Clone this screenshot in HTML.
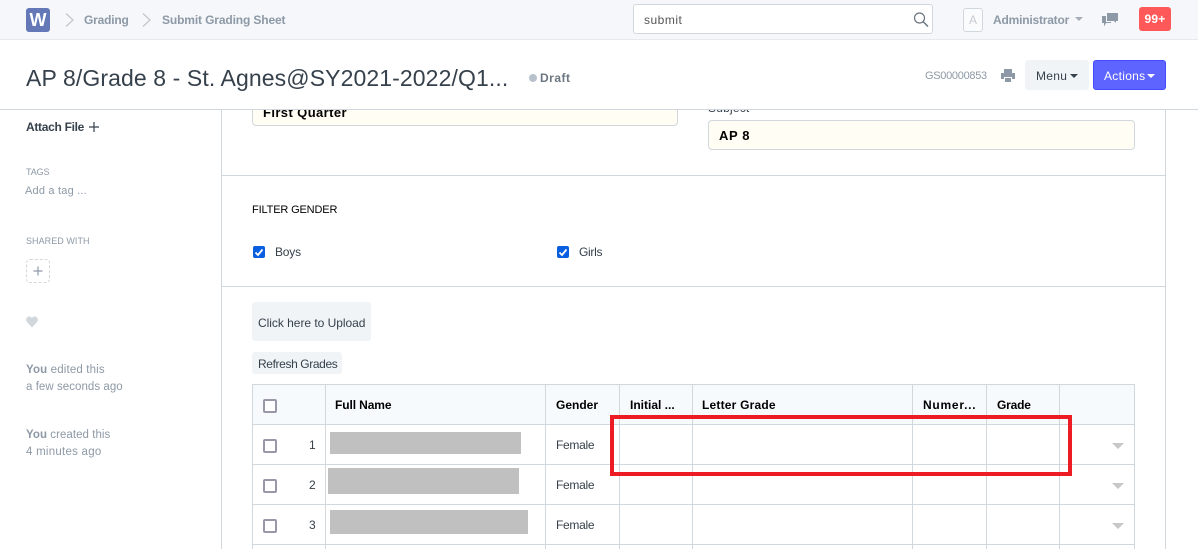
<!DOCTYPE html>
<html><head><meta charset="utf-8">
<style>
html,body{margin:0;padding:0;background:#fff}
#p{position:relative;width:1198px;height:549px;overflow:hidden;background:#fff;font-family:"Liberation Sans",sans-serif;font-size:12px;color:#36414c}
#p div,#p span.t{position:absolute;white-space:nowrap}
.t{line-height:16px;letter-spacing:.55px}
.b{font-weight:bold}
.g{color:#8d99a6}
.cb{width:10px;height:10px;border:2px solid #9a98a8;border-radius:2px;background:#fff}
.hl{background:#d1d8dd;height:1px}
.vl{background:#d1d8dd;width:1px}
.bar{background:#c0c0c0}
.car{width:0;height:0;border-left:6px solid transparent;border-right:6px solid transparent;border-top:6px solid #c8c8c8}
</style></head><body><div id="p">

<div style="left:252px;top:385px;width:883px;height:39px;background:#f7fafc"></div>
<div style="left:252px;top:108px;width:424px;height:17px;background:#fffdf4;border:1px solid #d1d8dd;border-top:0;border-radius:0 0 4px 4px"></div>
<div class="t b" style="left:263px;top:105px;font-size:13px;color:#000;letter-spacing:.4px">First Quarter</div>
<div class="t" style="left:708px;top:100px;color:#36414c;letter-spacing:.2px">Subject</div>
<div style="left:708px;top:120px;width:425px;height:28px;background:#fffdf4;border:1px solid #d1d8dd;border-radius:4px"></div>
<div class="t b" style="left:719px;top:128px;font-size:13px;color:#000;letter-spacing:.6px">AP 8</div>

<div style="left:0;top:40px;width:1198px;height:69px;background:#fff"></div>
<div class="hl" style="left:0;top:109px;width:1198px"></div>
<div style="left:0;top:0;width:1198px;height:39px;background:#f5f7fa"></div>
<div style="left:0;top:39px;width:1198px;height:1px;background:#e6e9ed"></div>

<div style="left:26px;top:8px;width:24px;height:24px;background:#6478b8;border-radius:3px"></div>
<div class="b" style="left:26px;top:8px;width:24px;text-align:center;line-height:24px;font-size:18px;color:#fff">W</div>
<svg style="position:absolute;left:64px;top:12px" width="12" height="16"><path d="M2 1.5 L9 8 L2 14.5" fill="none" stroke="#c0c6cc" stroke-width="1.2"/></svg>
<div class="t b g" style="left:84px;top:12px;letter-spacing:-.2px">Grading</div>
<svg style="position:absolute;left:141px;top:12px" width="12" height="16"><path d="M2 1.5 L9 8 L2 14.5" fill="none" stroke="#c0c6cc" stroke-width="1.2"/></svg>
<div class="t b g" style="left:162px;top:12px;letter-spacing:-.13px">Submit Grading Sheet</div>

<div style="left:633px;top:4px;width:298px;height:28px;background:#fff;border:1px solid #d1d8dd;border-radius:3px"></div>
<div class="t" style="left:644px;top:12px;color:#555;letter-spacing:.5px">submit</div>
<svg style="position:absolute;left:912px;top:11px" width="18" height="18"><circle cx="7.5" cy="7" r="5" fill="none" stroke="#6b7480" stroke-width="1.2"/><path d="M11 10.5 L16 15.5" stroke="#6b7480" stroke-width="1.5"/></svg>

<div style="left:963px;top:8px;width:18px;height:22px;background:#fafbfc;border:1px solid #d1d8dd;border-radius:3px"></div>
<div class="t" style="left:963px;top:12px;width:20px;text-align:center;color:#c5ccd3;letter-spacing:0">A</div>
<div class="t b g" style="left:993px;top:12px;letter-spacing:-.2px">Administrator</div>
<div style="left:1075px;top:17px;width:0;height:0;border-left:4px solid transparent;border-right:4px solid transparent;border-top:4px solid #a5aeb8"></div>
<svg style="position:absolute;left:1102px;top:13px" width="16" height="14"><path d="M5 0H16V8H14V10L12 8H5Z" fill="#8d99a6"/><path d="M0 3H4V9H9V10H4L2 13.5V10H0Z" fill="#8d99a6"/></svg>
<div style="left:1139px;top:7px;width:32px;height:24px;background:#ff5858;border-radius:3px"></div>
<div class="t b" style="left:1139px;top:11px;width:32px;text-align:center;color:#fff;letter-spacing:.2px">99+</div>

<div style="left:26px;top:63px;font-size:23px;line-height:30px;color:#36414c;letter-spacing:.1px">AP 8/Grade 8 - St. Agnes@SY2021-2022/Q1...</div>
<div style="left:529px;top:74px;width:8px;height:8px;border-radius:50%;background:#b8c2cc"></div>
<div class="t b" style="left:540px;top:70px;color:#6c7680;letter-spacing:.5px">Draft</div>
<div class="t" style="left:925px;top:68px;color:#8d99a6;font-size:11px;letter-spacing:-.3px">GS00000853</div>
<svg style="position:absolute;left:1001px;top:69px" width="14" height="13"><path d="M3 0H11V4H3Z M0 4H14V10H11V8H3V10H0Z M4 9H10V13H4Z" fill="#8d99a6"/></svg>
<div style="left:1025px;top:60px;width:64px;height:30px;background:#f0f4f7;border-radius:3px"></div>
<div class="t" style="left:1036px;top:68px;color:#36414c;letter-spacing:.3px">Menu</div>
<div style="left:1070px;top:74px;width:0;height:0;border-left:4px solid transparent;border-right:4px solid transparent;border-top:4px solid #36414c"></div>
<div style="left:1093px;top:60px;width:71px;height:28px;background:#5e64ff;border:1px solid #444bff;border-radius:3px"></div>
<div class="t" style="left:1104px;top:68px;color:#fff;letter-spacing:.3px">Actions</div>
<div style="left:1147px;top:74px;width:0;height:0;border-left:4px solid transparent;border-right:4px solid transparent;border-top:4px solid #fff"></div>

<div class="vl" style="left:221px;top:110px;height:439px"></div>
<div class="vl" style="left:1165px;top:110px;height:439px"></div>
<div class="hl" style="left:222px;top:175px;width:943px"></div>
<div class="hl" style="left:222px;top:286px;width:943px"></div>

<div class="t b" style="left:26px;top:119px;letter-spacing:-.3px">Attach File</div>
<svg style="position:absolute;left:89px;top:122px" width="11" height="11"><path d="M5 0V10M0 5H10" stroke="#36414c" stroke-width="1.2"/></svg>
<div class="t g" style="left:26px;top:164px;font-size:9px;letter-spacing:-.1px">TAGS</div>
<div class="t g" style="left:25px;top:183px;font-size:11px;letter-spacing:.2px">Add a tag ...</div>
<div class="t g" style="left:26px;top:233px;font-size:9px;letter-spacing:.05px">SHARED WITH</div>
<div style="left:26px;top:259px;width:22px;height:22px;border:1px dashed #d1d8dd;border-radius:4px"></div>
<svg style="position:absolute;left:33px;top:266px" width="10" height="10"><path d="M5 0.5V9.5M0.5 5H9.5" stroke="#8d99a6" stroke-width="1.2"/></svg>
<svg style="position:absolute;left:26px;top:316px" width="12" height="12"><path d="M6 11.5L0.5 5.5C-0.5 3 1 .5 3.2 .5C4.5 .5 5.5 1.2 6 2.2C6.5 1.2 7.5 .5 8.8 .5C11 .5 12.5 3 11.5 5.5Z" fill="#d1d8dd"/></svg>
<div class="t g" style="left:26px;top:362px;letter-spacing:.15px;font-size:11.5px"><b>You</b> edited this</div>
<div class="t g" style="left:26px;top:379px;letter-spacing:.05px;font-size:11.5px">a few seconds ago</div>
<div class="t g" style="left:26px;top:427px;letter-spacing:.05px;font-size:11.5px"><b>You</b> created this</div>
<div class="t g" style="left:26px;top:444px;letter-spacing:.25px;font-size:11.5px">4 minutes ago</div>

<div class="t" style="left:252px;top:202px;color:#000;font-size:11px;letter-spacing:-.15px">FILTER GENDER</div>
<div style="left:253px;top:246px;width:12px;height:12px;background:#0a5fe0;border-radius:2px"></div>
<svg style="position:absolute;left:253px;top:246px" width="12" height="12"><path d="M2.5 6.5L5 9L9.5 3.5" fill="none" stroke="#fff" stroke-width="1.8"/></svg>
<div class="t" style="left:275px;top:244px;letter-spacing:-.2px">Boys</div>
<div style="left:557px;top:246px;width:12px;height:12px;background:#0a5fe0;border-radius:2px"></div>
<svg style="position:absolute;left:557px;top:246px" width="12" height="12"><path d="M2.5 6.5L5 9L9.5 3.5" fill="none" stroke="#fff" stroke-width="1.8"/></svg>
<div class="t" style="left:579px;top:244px;letter-spacing:-.3px">Girls</div>

<div style="left:252px;top:302px;width:119px;height:39px;background:#f0f4f7;border-radius:3px"></div>
<div class="t" style="left:258px;top:315px;letter-spacing:-.03px">Click here to Upload</div>
<div style="left:252px;top:352px;width:90px;height:22px;background:#f0f4f7;border-radius:3px"></div>
<div class="t" style="left:258px;top:356px;letter-spacing:-.38px">Refresh Grades</div>

<div class="hl" style="left:252px;top:384px;width:883px"></div>
<div class="hl" style="left:252px;top:424px;width:883px"></div>
<div class="hl" style="left:252px;top:464px;width:883px"></div>
<div class="hl" style="left:252px;top:504px;width:883px"></div>
<div class="hl" style="left:252px;top:544px;width:883px"></div>
<div class="vl" style="left:252px;top:384px;height:165px"></div>
<div class="vl" style="left:325px;top:384px;height:165px"></div>
<div class="vl" style="left:545px;top:384px;height:165px"></div>
<div class="vl" style="left:619px;top:384px;height:165px"></div>
<div class="vl" style="left:692px;top:384px;height:165px"></div>
<div class="vl" style="left:912px;top:384px;height:165px"></div>
<div class="vl" style="left:986px;top:384px;height:165px"></div>
<div class="vl" style="left:1059px;top:384px;height:165px"></div>
<div class="vl" style="left:1134px;top:384px;height:165px"></div>

<div class="cb" style="left:263px;top:399px"></div>
<div class="cb" style="left:263px;top:439px"></div>
<div class="cb" style="left:263px;top:479px"></div>
<div class="cb" style="left:263px;top:519px"></div>

<div class="t b" style="left:335px;top:397px;color:#000;letter-spacing:-.1px">Full Name</div>
<div class="t b" style="left:556px;top:397px;color:#000;letter-spacing:0">Gender</div>
<div class="t b" style="left:630px;top:397px;color:#000;letter-spacing:0">Initial ...</div>
<div class="t b" style="left:702px;top:397px;color:#000;letter-spacing:.2px">Letter Grade</div>
<div class="t b" style="left:923px;top:397px;color:#000;letter-spacing:.75px">Numer...</div>
<div class="t b" style="left:997px;top:397px;color:#000;letter-spacing:-.2px">Grade</div>

<div class="t" style="left:309px;top:437px;letter-spacing:0">1</div>
<div class="t" style="left:309px;top:477px;letter-spacing:0">2</div>
<div class="t" style="left:309px;top:517px;letter-spacing:0">3</div>
<div class="bar" style="left:330px;top:432px;width:191px;height:22px"></div>
<div class="bar" style="left:328px;top:468px;width:191px;height:26px"></div>
<div class="bar" style="left:330px;top:510px;width:198px;height:24px"></div>
<div class="t" style="left:556px;top:437px;letter-spacing:-.3px">Female</div>
<div class="t" style="left:556px;top:477px;letter-spacing:-.3px">Female</div>
<div class="t" style="left:556px;top:517px;letter-spacing:-.3px">Female</div>
<div class="car" style="left:1112px;top:443px"></div>
<div class="car" style="left:1112px;top:483px"></div>
<div class="car" style="left:1112px;top:523px"></div>

<div style="left:610px;top:415px;width:454px;height:53px;border:4px solid #ed1c24"></div>
</div></body></html>
